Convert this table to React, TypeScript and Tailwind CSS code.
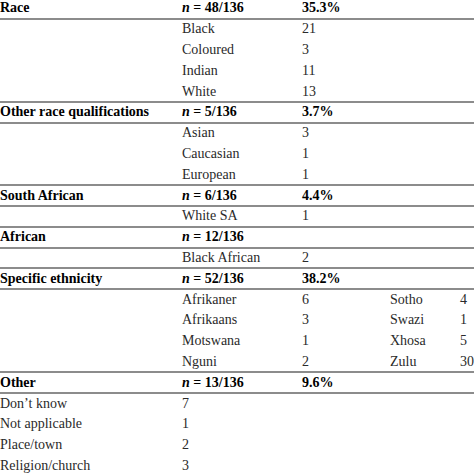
type Row = {
  cells: string[];
  head?: boolean;
};

const rows: Row[] = [
  { cells: ["Race", "n = 48/136", "35.3%"], head: true },
  { cells: ["", "Black", "21"] },
  { cells: ["", "Coloured", "3"] },
  { cells: ["", "Indian", "11"] },
  { cells: ["", "White", "13"] },
  { cells: ["Other race qualifications", "n = 5/136", "3.7%"], head: true },
  { cells: ["", "Asian", "3"] },
  { cells: ["", "Caucasian", "1"] },
  { cells: ["", "European", "1"] },
  { cells: ["South African", "n = 6/136", "4.4%"], head: true },
  { cells: ["", "White SA", "1"] },
  { cells: ["African", "n = 12/136", ""], head: true },
  { cells: ["", "Black African", "2"] },
  { cells: ["Specific ethnicity", "n = 52/136", "38.2%"], head: true },
  { cells: ["", "Afrikaner", "6", "Sotho", "4"] },
  { cells: ["", "Afrikaans", "3", "Swazi", "1"] },
  { cells: ["", "Motswana", "1", "Xhosa", "5"] },
  { cells: ["", "Nguni", "2", "Zulu", "30"] },
  { cells: ["Other", "n = 13/136", "9.6%"], head: true },
  { cells: ["Don\u2019t know", "7", ""] },
  { cells: ["Not applicable", "1", ""] },
  { cells: ["Place/town", "2", ""] },
  { cells: ["Religion/church", "3", ""] },
];

function Count({ text }: { text: string }) {
  if (text.startsWith("n = ")) {
    return (
      <>
        <i>n</i> = {text.slice(4)}
      </>
    );
  }
  return <>{text}</>;
}

export default function App() {
  return (
    <div className="w-[474px] h-[474px] overflow-hidden bg-white">
      <div className="mt-[-2px] font-['Liberation_Serif','Times_New_Roman',serif] text-[14px] leading-none text-[#2a2a2a]">
        {rows.map((row, i) => (
          <div
            key={i}
            className={
              "relative grid h-[20.8px] grid-cols-[182px_120px_88px_70px_1fr] items-center whitespace-nowrap " +
              (row.head ? "font-bold text-black" : "")
            }
          >
            {row.head && i > 0 && (
              <div className="absolute left-0 right-0 top-[-1px] h-[2px] bg-[#8c8c8c]" />
            )}
            {row.head && (
              <div className="absolute left-0 right-0 bottom-[-1px] h-[2px] bg-[#8c8c8c]" />
            )}
            {row.cells.map((c, j) => (
              <div key={j}>
                <Count text={c} />
              </div>
            ))}
          </div>
        ))}
      </div>
    </div>
  );
}
